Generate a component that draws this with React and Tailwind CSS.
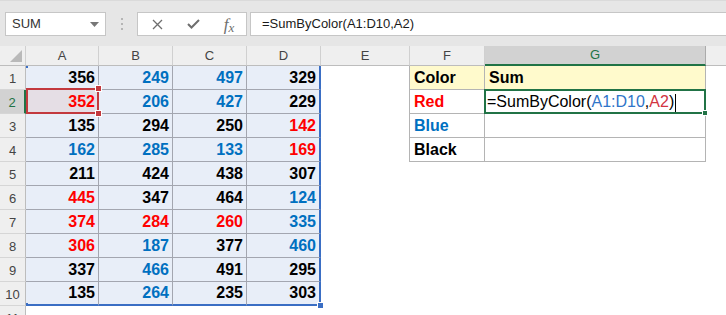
import React from "react";

const K = "#000000";
const R = "#ff0000";
const B = "#0070c0";

const data = [
  [[356, K], [249, B], [497, B], [329, K]],
  [[352, R], [206, B], [427, B], [229, K]],
  [[135, K], [294, K], [250, K], [142, R]],
  [[162, B], [285, B], [133, B], [169, R]],
  [[211, K], [424, K], [438, K], [307, K]],
  [[445, R], [347, K], [464, K], [124, B]],
  [[374, R], [284, R], [260, R], [335, B]],
  [[306, R], [187, B], [377, K], [460, B]],
  [[337, K], [466, B], [491, K], [295, K]],
  [[135, K], [264, B], [235, K], [303, K]],
];

const colW = ["w-[73px]", "w-[74px]", "w-[74px]", "w-[74px]"];

const fLabels = [
  ["Color", "#000000"],
  ["Red", "#ff0000"],
  ["Blue", "#0070c0"],
  ["Black", "#000000"],
];

function RowHeader({ n, active }) {
  return (
    <div
      className={
        "w-[26px] h-[24px] shrink-0 flex items-end justify-center pb-[4px] text-[13px] leading-none border-b border-b-[#d6d6d6] " +
        (active
          ? "bg-[#d2d2d2] text-[#217346] border-r-2 border-r-[#217346]"
          : "bg-[#efefef] text-[#444444] border-r border-r-[#bdbdbd]")
      }
    >
      {n}
    </div>
  );
}

function DataCell({ v, c, idx, last, selected }) {
  const isD = idx === 3;
  let cls =
    colW[idx] +
    " h-[24px] shrink-0 relative flex items-end justify-end pr-[3px] pb-[3px] text-[16px] font-bold leading-none ";
  cls += selected ? "bg-[#e5dee5] " : "bg-[#e8eef8] ";
  cls += isD ? "border-r-2 border-r-[#3a6ec4] " : "border-r border-r-[#a3a6b0] ";
  cls += last ? "border-b-2 border-b-[#3a6ec4] " : "border-b border-b-[#a3a6b0] ";
  return (
    <div className={cls} style={{ color: c }}>
      {v}
      {selected && (
        <>
          <div className="absolute z-10 left-0 top-[-2px] right-[-1px] bottom-[-1px] border-2 border-[#c3393e] pointer-events-none" />
          <div className="absolute z-20 right-[-4px] top-[-5px] w-[7px] h-[7px] bg-[#c3393e] border border-white" />
          <div className="absolute z-20 right-[-4px] bottom-[-4px] w-[7px] h-[7px] bg-[#c3393e] border border-white" />
        </>
      )}
      {isD && last && (
        <div className="absolute z-20 right-[-5px] bottom-[-5px] w-[7px] h-[7px] bg-[#3a6ec4] border border-white" />
      )}
      {idx === 0 && last && (
        <div className="absolute z-10 left-0 bottom-[-2px] w-[2px] h-[3px] bg-[#3a6ec4]" />
      )}
      {idx === 0 && v === 356 && (
        <div className="absolute z-10 left-0 top-0 w-[2px] h-[2px] bg-[#3a6ec4]" />
      )}
    </div>
  );
}

export default function App() {
  return (
    <div
      className="w-[726px] h-[315px] overflow-hidden bg-white select-none"
      style={{ fontFamily: '"Liberation Sans", Arial, sans-serif' }}
    >
      {/* Formula bar */}
      <div className="h-[46px] bg-[#e6e6e6] border-t border-t-[#dadada] flex items-start pt-[11px] pl-[5px]">
        <div className="w-[101px] h-[24px] bg-white border border-[#c6c6c6] flex items-center justify-between pl-[6px] pr-[6px] text-[13px] text-[#333333]">
          <span>SUM</span>
          <svg width="9" height="5" viewBox="0 0 9 5">
            <path d="M0 0 L9 0 L4.5 5 Z" fill="#777777" />
          </svg>
        </div>
        <div className="w-[31px] h-[24px] flex flex-col items-center justify-center gap-[3px]">
          <div className="w-[2px] h-[2px] bg-[#b5b5b5]" />
          <div className="w-[2px] h-[2px] bg-[#b5b5b5]" />
          <div className="w-[2px] h-[2px] bg-[#b5b5b5]" />
        </div>
        <div className="w-[110px] h-[24px] bg-white border border-[#c6c6c6] flex items-center">
          <div className="w-[37px] flex justify-center pl-[2px]">
            <svg width="11" height="11" viewBox="0 0 11 11">
              <path d="M1 1 L10 10 M10 1 L1 10" stroke="#6e6e6e" strokeWidth="1.3" fill="none" />
            </svg>
          </div>
          <div className="w-[37px] flex justify-center">
            <svg width="13" height="10" viewBox="0 0 13 10">
              <path d="M1 5 L4.5 8.5 L12 1" stroke="#6e6e6e" strokeWidth="2" fill="none" />
            </svg>
          </div>
          <div
            className="w-[34px] flex justify-center items-end italic text-[#6e6e6e] text-[17px] leading-none"
            style={{ fontFamily: '"Liberation Serif", "Times New Roman", serif' }}
          >
            <span>f</span>
            <span className="text-[13px] relative top-[1px]">x</span>
          </div>
        </div>
        <div className="ml-[3px] flex-1 h-[24px] bg-white border border-[#c6c6c6] border-r-0 flex items-center pl-[11px] text-[13px] text-[#1a1a1a]">
          =SumByColor(A1:D10,A2)
        </div>
      </div>

      {/* Column header row */}
      <div className="flex h-[20px] bg-[#efefef] text-[13px] text-[#444444]">
        <div className="w-[26px] h-[20px] shrink-0 relative border-r border-r-[#d0d0d0] border-b border-b-[#bdbdbd]">
          <svg className="absolute right-[3px] bottom-[3px]" width="12" height="12" viewBox="0 0 12 12">
            <path d="M12 0 L12 12 L0 12 Z" fill="#b9b9b9" />
          </svg>
        </div>
        {["A", "B", "C", "D"].map((l, i) => (
          <div
            key={l}
            className={colW[i] + " h-[20px] shrink-0 flex items-center justify-center border-r border-r-[#d0d0d0] border-b border-b-[#bdbdbd]"}
          >
            {l}
          </div>
        ))}
        <div className="w-[89px] h-[20px] shrink-0 flex items-center justify-center border-r border-r-[#d0d0d0] border-b border-b-[#bdbdbd]">
          E
        </div>
        <div className="w-[75px] h-[20px] shrink-0 flex items-center justify-center border-r border-r-[#d0d0d0] border-b border-b-[#bdbdbd]">
          F
        </div>
        <div className="w-[221px] h-[20px] shrink-0 flex items-center justify-center bg-[#d2d2d2] text-[#217346] border-r border-r-[#ababab] border-b-2 border-b-[#217346]">
          G
        </div>
        <div className="flex-1 h-[20px] border-b border-b-[#bdbdbd]" />
      </div>

      {/* Rows */}
      {Array.from({ length: 11 }).map((_, r) => {
        const row = data[r];
        const inTable = r < 4;
        return (
          <div key={r} className="flex h-[24px]">
            <RowHeader n={r + 1} active={r === 1} />
            {row
              ? row.map(([v, c], i) => (
                  <DataCell key={i} v={v} c={c} idx={i} last={r === 9} selected={r === 1 && i === 0} />
                ))
              : <div className="w-[295px] h-[24px] shrink-0 bg-white" />}
            <div
              className={
                "w-[89px] h-[24px] shrink-0 bg-white " + (inTable ? "border-r border-r-[#b4b4b4]" : "")
              }
            />
            {/* F */}
            <div
              className={
                "w-[75px] h-[24px] shrink-0 flex items-end pl-[4px] pb-[3px] text-[16px] font-bold leading-none " +
                (inTable ? "border-r border-r-[#b4b4b4] border-b border-b-[#b4b4b4] " : "") +
                (r === 0 ? "bg-[#fffacc]" : "bg-white")
              }
              style={{ color: inTable ? fLabels[r][1] : undefined }}
            >
              {inTable ? fLabels[r][0] : ""}
            </div>
            {/* G */}
            <div
              className={
                "w-[221px] h-[24px] shrink-0 relative flex items-end pl-[2px] pb-[3px] text-[16px] leading-none text-black " +
                (inTable ? "border-r border-r-[#b4b4b4] border-b border-b-[#b4b4b4] " : "") +
                (r === 0 ? "bg-[#fffacc]" : "bg-white")
              }
            >
              {r === 0 && <span className="font-bold pl-[2px]">Sum</span>}
              {r === 1 && (
                <>
                  <span className="whitespace-nowrap">
                    =SumByColor(
                    <span className="text-[#2f75c9]">A1:D10</span>,
                    <span className="text-[#d2343f]">A2</span>)
                  </span>
                  <span className="inline-block w-[1px] h-[18px] bg-black ml-[1px] mb-[-2px]" />
                  <div className="absolute z-10 left-[-1px] top-[-1px] right-[-1px] bottom-[-1px] border-2 border-[#217346] pointer-events-none" />
                  <div className="absolute z-20 right-[-3px] bottom-[-3px] w-[6px] h-[6px] bg-[#217346] border border-white" />
                </>
              )}
            </div>
            <div className="flex-1 h-[24px] bg-white" />
          </div>
        );
      })}
    </div>
  );
}
